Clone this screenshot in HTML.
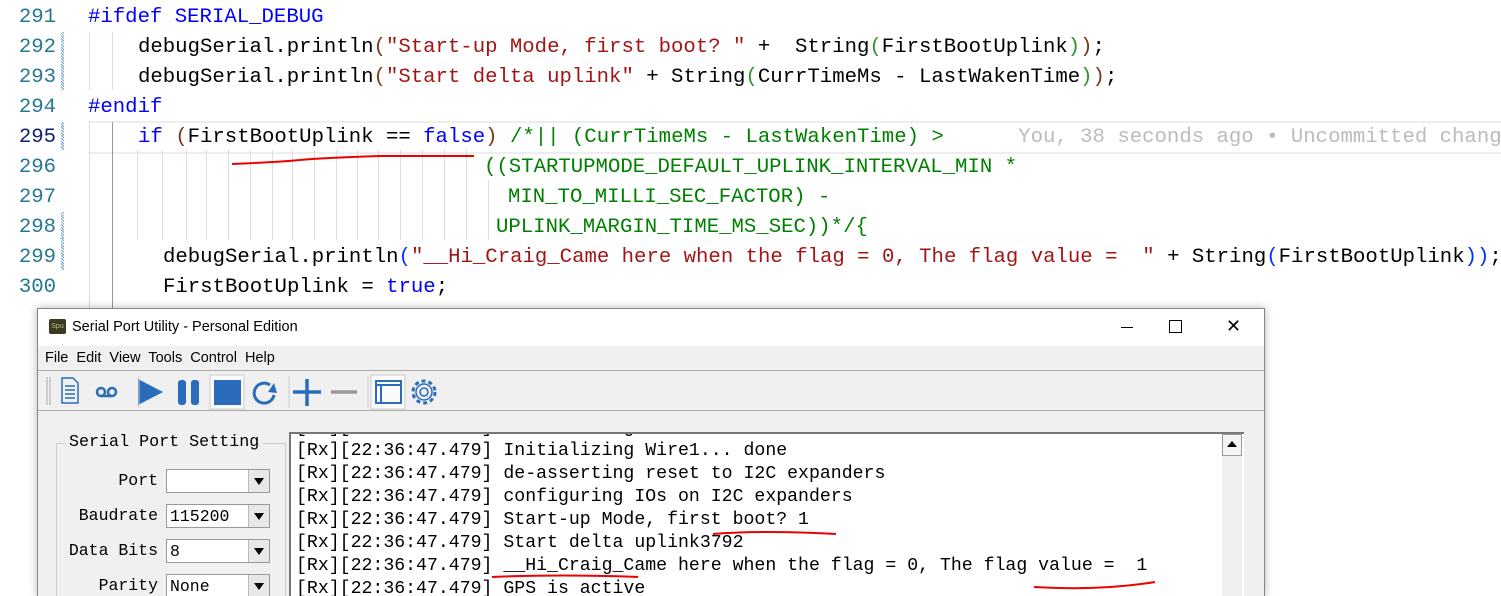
<!DOCTYPE html>
<html style="overflow:hidden"><head><meta charset="utf-8"><style>
html,body{margin:0;width:1501px;height:596px;overflow:hidden}
body{background:#fff;position:relative;font-family:"Liberation Mono",monospace}
.ln{position:absolute;left:18px;width:38px;text-align:right;color:#237893;font-size:20.67px;line-height:30px}
.c{position:absolute;font-size:20.67px;line-height:30px;white-space:pre;color:#000}
.k{color:#0000ff}.s{color:#a31515}.g{color:#008000}.b1{color:#7b3814}.b2{color:#319331}.b3{color:#0431fa}
.gut{position:absolute;left:61px;width:3px;background:repeating-linear-gradient(45deg,#6fa3c9 0 1px,#fff 1px 2px)}
.guide{position:absolute;width:1px;background:#ddd}
.win{position:absolute;left:37px;top:308px;width:1226px;height:288px;background:#f0f0f0;border:1px solid #888;border-bottom:none;box-shadow:0 0 8px rgba(0,0,0,.3);font-family:"Liberation Sans",sans-serif;overflow:hidden}
.out{font-size:18.2px;line-height:23px;white-space:pre;color:#000}
.lbl{position:absolute;font-size:16.5px;color:#000;text-align:right;width:100px}
.cb{position:absolute;left:128px;width:104px;height:24px;background:#fff;border:1px solid #999;font-size:16.5px;line-height:24px;padding-left:3px;box-sizing:border-box}
.cb:after{content:"";position:absolute;right:0;top:0;width:20px;height:22px;background:#e8e8e8;border-left:1px solid #bbb}
.cb i{position:absolute;right:5px;top:8px;width:0;height:0;border-left:5px solid transparent;border-right:5px solid transparent;border-top:7px solid #000;z-index:1}
</style></head><body>
<div style="position:absolute;left:88px;top:121px;width:1413px;height:29px;border-top:2px solid #eee;border-bottom:2px solid #eee"></div>
<div style="position:absolute;left:0;top:2px;width:1501px;height:300px">
<div class="ln" style="top:1px">291</div>
<div class="ln" style="top:31px">292</div>
<div class="ln" style="top:61px">293</div>
<div class="ln" style="top:91px">294</div>
<div class="ln" style="top:121px;color:#0b216f">295</div>
<div class="ln" style="top:151px">296</div>
<div class="ln" style="top:181px">297</div>
<div class="ln" style="top:211px">298</div>
<div class="ln" style="top:241px">299</div>
<div class="ln" style="top:271px">300</div>
<div class="c" style="left:88px;top:1px"><span class="k">#ifdef SERIAL_DEBUG</span></div>
<div class="c" style="left:138px;top:31px">debugSerial.println<span class="b1">(</span><span class="s">"Start-up Mode, first boot? "</span> +  String<span class="b2">(</span>FirstBootUplink<span class="b2">)</span><span class="b1">)</span>;</div>
<div class="c" style="left:138px;top:61px">debugSerial.println<span class="b1">(</span><span class="s">"Start delta uplink"</span> + String<span class="b2">(</span>CurrTimeMs - LastWakenTime<span class="b2">)</span><span class="b1">)</span>;</div>
<div class="c" style="left:88px;top:91px"><span class="k">#endif</span></div>
<div class="c" style="left:138px;top:121px"><span class="k">if</span> <span class="b1">(</span>FirstBootUplink == <span class="k">false</span><span class="b1">)</span> <span class="g">/*|| (CurrTimeMs - LastWakenTime) &gt;</span>      <span style="color:#bbb">You, 38 seconds ago • Uncommitted chang</span></div>
<div class="c g" style="left:484px;top:151px">((STARTUPMODE_DEFAULT_UPLINK_INTERVAL_MIN *</div>
<div class="c g" style="left:508px;top:181px">MIN_TO_MILLI_SEC_FACTOR) -</div>
<div class="c g" style="left:496px;top:211px">UPLINK_MARGIN_TIME_MS_SEC))*/{</div>
<div class="c" style="left:163px;top:241px">debugSerial.println<span class="b3">(</span><span class="s">"__Hi_Craig_Came here when the flag = 0, The flag value =  "</span> + String<span class="b3">(</span>FirstBootUplink<span class="b3">)</span><span class="b3">)</span>;</div>
<div class="c" style="left:163px;top:271px">FirstBootUplink = <span class="k">true</span>;</div>
</div>
<div class="gut" style="top:32px;height:58px"></div>
<div class="gut" style="top:122px;height:28px"></div>
<div class="gut" style="top:212px;height:58px"></div>
<div class="guide" style="left:89px;top:32px;height:58px"></div>
<div class="guide" style="left:112px;top:32px;height:58px"></div>
<div class="guide" style="left:89px;top:122px;height:186px"></div>
<div class="guide" style="left:112px;top:122px;height:186px;background:#999"></div>
<div class="guide" style="left:137px;top:150px;height:90px"></div>
<div class="guide" style="left:162px;top:150px;height:90px"></div>
<div class="guide" style="left:186px;top:150px;height:90px"></div>
<div class="guide" style="left:206px;top:150px;height:90px"></div>
<div class="guide" style="left:228px;top:150px;height:90px"></div>
<div class="guide" style="left:250px;top:150px;height:90px"></div>
<div class="guide" style="left:272px;top:150px;height:90px"></div>
<div class="guide" style="left:292px;top:150px;height:90px"></div>
<div class="guide" style="left:314px;top:150px;height:90px"></div>
<div class="guide" style="left:336px;top:150px;height:90px"></div>
<div class="guide" style="left:357px;top:150px;height:90px"></div>
<div class="guide" style="left:378px;top:150px;height:90px"></div>
<div class="guide" style="left:400px;top:150px;height:90px"></div>
<div class="guide" style="left:422px;top:150px;height:90px"></div>
<div class="guide" style="left:444px;top:150px;height:90px"></div>
<div class="guide" style="left:466px;top:150px;height:90px"></div>
<div class="guide" style="left:488px;top:180px;height:60px"></div>
<div class="win">
 <div style="position:absolute;left:0;top:0;right:0;height:37px;background:#fff"></div>
 <div style="position:absolute;left:11px;top:10px;width:17px;height:15px;background:#3a3a20;border-radius:2px;color:#bb9;font-size:7px;line-height:15px;text-align:center">Spu</div>
 <div style="position:absolute;left:34px;top:10px;font-size:14.5px;color:#000">Serial Port Utility - Personal Edition</div>
 <div style="position:absolute;left:1083px;top:18px;width:12px;height:1px;background:#000"></div>
 <div style="position:absolute;left:1131px;top:11px;width:11px;height:11px;border:1px solid #000"></div>
 <div style="position:absolute;left:1188px;top:9px;font-size:18px;line-height:18px;font-family:'DejaVu Sans';color:#000">✕</div>
 <div style="position:absolute;left:7px;top:41px;font-size:14.5px;word-spacing:4px;color:#000">File Edit View Tools Control Help</div>
 <div style="position:absolute;left:0;right:0;top:61px;height:1px;background:#aaa"></div>
 <div style="position:absolute;left:0;right:0;top:101px;height:1px;background:#aaa"></div>
 <svg style="position:absolute;left:0;top:62px" width="400" height="40" fill="#2a6cba" stroke="#2a6cba">
  <path d="M9 6v28M12 6v28" stroke="#aaa" fill="none"/>
  <path d="M24 7h11l5 5v20h-16z M27 15h10M27 19h10M27 23h10M27 27h10" fill="none" stroke-width="1.5"/>
  <circle cx="63" cy="21" r="4" fill="none" stroke-width="2.5"/><circle cx="74" cy="21" r="4" fill="none" stroke-width="2.5"/><path d="M63 25h11" stroke-width="2.5"/>
  <path d="M100 8l25 13 -25 13z" stroke="none"/>
  <rect x="140" y="9" width="8" height="25" rx="3" stroke="none"/><rect x="153" y="9" width="8" height="25" rx="3" stroke="none"/>
  <rect x="172" y="4" width="34" height="34" fill="#fafafa" stroke="#ccc"/>
  <rect x="176" y="9" width="27" height="25" stroke="none"/>
  <path d="M232 14a10 10 0 1 0 4 10" fill="none" stroke-width="3"/><path d="M236 12l3 10 -9 -1z" stroke="none"/>
  <path d="M255 21h28M269 8v27" stroke-width="3.5" fill="none"/>
  <path d="M293 21h26" stroke="#999" stroke-width="3.5" fill="none"/>
  <path d="M251 5v32M330 5v32M101 5v32" stroke="#ccc" fill="none"/>
  <rect x="333" y="4" width="34" height="34" fill="#fafafa" stroke="#ccc"/>
  <rect x="338" y="10" width="25" height="22" fill="none" stroke-width="2"/><path d="M338 14h25M343 14v18" stroke-width="2" fill="none"/>
  <circle cx="386" cy="21" r="11" fill="none" stroke-width="3" stroke-dasharray="4 3"/><circle cx="386" cy="21" r="8" fill="none" stroke-width="1.5"/><circle cx="386" cy="21" r="4" fill="none" stroke-width="1.5"/>
 </svg>
 <div style="position:absolute;left:18px;top:134px;width:228px;height:200px;border:1px solid #ccc"></div>
 <div style="position:absolute;left:27px;top:124px;padding:0 4px;background:#f0f0f0;font-family:'Liberation Mono',monospace;font-size:16.7px">Serial Port Setting</div>
 <div class="lbl" style="left:20px;top:162px;font-family:'Liberation Mono',monospace">Port</div>
 <div class="lbl" style="left:20px;top:197px;font-family:'Liberation Mono',monospace">Baudrate</div>
 <div class="lbl" style="left:20px;top:232px;font-family:'Liberation Mono',monospace">Data Bits</div>
 <div class="lbl" style="left:20px;top:267px;font-family:'Liberation Mono',monospace">Parity</div>
 <div class="cb" style="top:160px;font-family:'Liberation Mono',monospace"><i></i></div>
 <div class="cb" style="top:195px;font-family:'Liberation Mono',monospace">115200<i></i></div>
 <div class="cb" style="top:230px;font-family:'Liberation Mono',monospace">8<i></i></div>
 <div class="cb" style="top:265px;font-family:'Liberation Mono',monospace">None<i></i></div>
 <div style="position:absolute;left:251px;top:123px;width:953px;height:200px;background:#fff;border-top:2px solid #777;border-left:2px solid #777;overflow:hidden">
  <div class="out" style="position:absolute;left:5px;top:-17px;font-family:'Liberation Mono',monospace">[Rx][22:36:47.479] Initializing Wire0... done
[Rx][22:36:47.479] Initializing Wire1... done
[Rx][22:36:47.479] de-asserting reset to I2C expanders
[Rx][22:36:47.479] configuring IOs on I2C expanders
[Rx][22:36:47.479] Start-up Mode, first boot? 1
[Rx][22:36:47.479] Start delta uplink3792
[Rx][22:36:47.479] __Hi_Craig_Came here when the flag = 0, The flag value =  1
[Rx][22:36:47.479] GPS is active</div>
  <div style="position:absolute;left:931px;top:0;width:20px;height:200px;background:#f0f0f0"></div>
  <div style="position:absolute;left:931px;top:0;width:18px;height:20px;background:#f4f4f4;border:1px solid #999"><div style="margin:6px auto 0;width:0;height:0;border-left:5px solid transparent;border-right:5px solid transparent;border-bottom:6px solid #000"></div></div>
 </div>
</div>
<svg style="position:absolute;left:0;top:0;z-index:5" width="1501" height="596">
<path d="M232 164 Q280 162 300 160 T380 156 L474 156" stroke="#e00" stroke-width="2" fill="none"/>
<path d="M713 534 Q760 530 836 534" stroke="#e00" stroke-width="2" fill="none"/>
<path d="M492 577 Q560 574 638 577" stroke="#e00" stroke-width="2" fill="none"/>
<path d="M1034 587 Q1100 591 1155 582" stroke="#e00" stroke-width="2" fill="none"/>
</svg>
</body></html>
